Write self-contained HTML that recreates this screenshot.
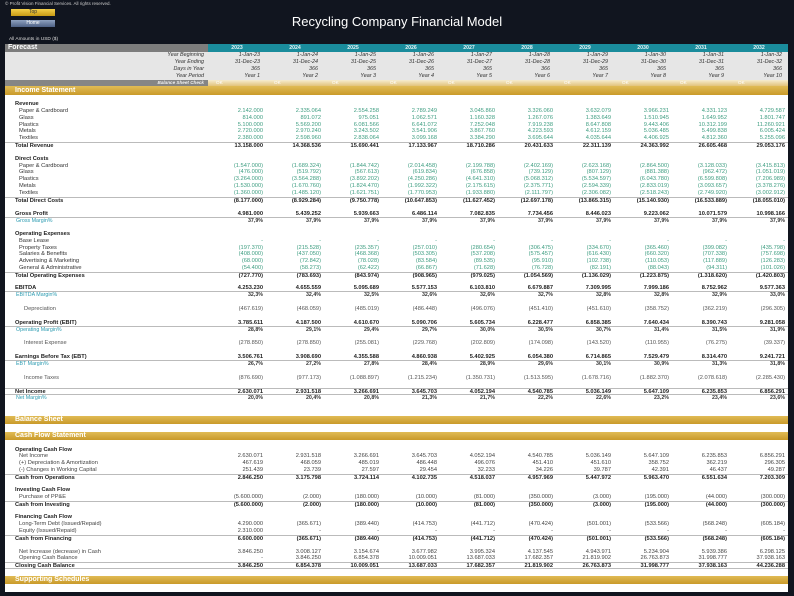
<!DOCTYPE html>
<html><head><meta charset="utf-8"><style>
*{margin:0;padding:0;box-sizing:border-box}
body{width:794px;height:596px;background:#11151f;font-family:"Liberation Sans",sans-serif;position:relative;overflow:hidden;color:#333}
.sheet{position:absolute;left:5px;top:44px;width:783px;height:548px;background:#fff}
.r{position:absolute;left:5px;width:783px;height:7px;line-height:7px;font-size:5.7px;display:grid;grid-template-columns:203px repeat(10,58px);white-space:nowrap}
.r>b{font-weight:normal;padding-left:14px}
.r>i{font-style:normal;text-align:right;padding-right:3px}
.g>i{color:#3d9d80}
.t{font-weight:bold;color:#222;border-top:0.6px solid #bbb}
.t>b{font-weight:bold;padding-left:10px}
.h>b{font-weight:bold;padding-left:10px;color:#222}
.m>b{color:#2a9ab0;padding-left:11px;font-size:5.3px}
.m>i{font-weight:bold;color:#333;font-size:5.3px}
.bt{border-bottom:0.6px solid #bbb}
.bar{position:absolute;left:5px;width:783px;height:9px;background:linear-gradient(#e0bb55,#c99a2a);color:#fff;font-weight:bold;font-size:7px;line-height:9px;padding-left:10px}
.hd{position:absolute;left:5px;width:783px;height:7px;line-height:7px;font-size:5.4px;display:grid;grid-template-columns:203px repeat(10,58px);background:#e6e6e6;font-style:italic;color:#333}
.hd>b{text-align:right;padding-right:4px;font-weight:normal}
.hd>i{text-align:right;padding-right:6px}
</style></head><body>
<div style="position:absolute;left:5px;top:1px;font-size:4.5px;color:#ccc">© Profit Vision Financial Services. All rights reserved.</div>
<div style="position:absolute;left:11px;top:9px;width:44px;height:7px;background:linear-gradient(#f3cf4a,#c89a14);font-size:5px;line-height:7px;text-align:center;color:#333">Top</div>
<div style="position:absolute;left:11px;top:20px;width:44px;height:7px;background:linear-gradient(#8fa2c0,#4e6186);font-size:5px;line-height:7px;text-align:center;color:#fff">Home</div>
<div style="position:absolute;left:0;width:794px;top:14px;text-align:center;color:#fff;font-size:13px">Recycling Company Financial Model</div>
<div style="position:absolute;left:9px;top:37px;font-size:4.8px;color:#ddd">All Amounts in USD ($)</div>
<div class="sheet"></div>
<div style="position:absolute;left:5px;top:44px;width:203px;height:8px;background:#7d7d7d;color:#fff;font-weight:bold;font-size:7px;line-height:8px;padding-left:3px">Forecast</div>
<div style="position:absolute;left:208px;top:44px;width:580px;height:8px;background:#1a8c9c;display:grid;grid-template-columns:repeat(10,58px);color:#e8f4f6;font-size:5.2px;line-height:8px;font-weight:bold;text-align:center"><span>2023</span><span>2024</span><span>2025</span><span>2026</span><span>2027</span><span>2028</span><span>2029</span><span>2030</span><span>2031</span><span>2032</span></div>
<div class="hd" style="top:52px"><b>Year Beginning</b><i>1-Jan-23</i><i>1-Jan-24</i><i>1-Jan-25</i><i>1-Jan-26</i><i>1-Jan-27</i><i>1-Jan-28</i><i>1-Jan-29</i><i>1-Jan-30</i><i>1-Jan-31</i><i>1-Jan-32</i></div>
<div class="hd" style="top:59px"><b>Year Ending</b><i>31-Dec-23</i><i>31-Dec-24</i><i>31-Dec-25</i><i>31-Dec-26</i><i>31-Dec-27</i><i>31-Dec-28</i><i>31-Dec-29</i><i>31-Dec-30</i><i>31-Dec-31</i><i>31-Dec-32</i></div>
<div class="hd" style="top:66px"><b>Days in Year</b><i>365</i><i>366</i><i>365</i><i>365</i><i>365</i><i>366</i><i>365</i><i>365</i><i>365</i><i>366</i></div>
<div class="hd" style="top:73px"><b>Year Period</b><i>Year 1</i><i>Year 2</i><i>Year 3</i><i>Year 4</i><i>Year 5</i><i>Year 6</i><i>Year 7</i><i>Year 8</i><i>Year 9</i><i>Year 10</i></div>
<div style="position:absolute;left:5px;top:80px;width:203px;height:6px;background:#858585;color:#eee;font-size:4.6px;line-height:6px;text-align:right;padding-right:4px;font-style:italic;font-weight:bold">Balance Sheet Check</div>
<div style="position:absolute;left:208px;top:80px;width:580px;height:6px;background:linear-gradient(#f6ecd0,#e2c37a);display:grid;grid-template-columns:repeat(10,58px);color:#fff;font-size:4.6px;line-height:6px;padding-left:8px"><span>OK</span><span>OK</span><span>OK</span><span>OK</span><span>OK</span><span>OK</span><span>OK</span><span>OK</span><span>OK</span><span>OK</span></div>
<div class="bar" style="top:86px">Income Statement</div>

<div class="r h" style="top:101px"><b>Revenue</b></div>
<div class="r g" style="top:108px"><b>Paper &amp; Cardboard</b><i>2.142.000</i><i>2.335.064</i><i>2.554.258</i><i>2.789.249</i><i>3.045.860</i><i>3.326.060</i><i>3.632.079</i><i>3.966.231</i><i>4.331.123</i><i>4.729.587</i></div>
<div class="r g" style="top:115px"><b>Glass</b><i>814.000</i><i>891.072</i><i>975.051</i><i>1.062.571</i><i>1.160.328</i><i>1.267.076</i><i>1.383.649</i><i>1.510.945</i><i>1.649.952</i><i>1.801.747</i></div>
<div class="r g" style="top:122px"><b>Plastics</b><i>5.100.000</i><i>5.569.200</i><i>6.081.566</i><i>6.641.072</i><i>7.252.048</i><i>7.919.238</i><i>8.647.808</i><i>9.443.406</i><i>10.312.199</i><i>11.260.921</i></div>
<div class="r g" style="top:128px"><b>Metals</b><i>2.720.000</i><i>2.970.240</i><i>3.243.502</i><i>3.541.906</i><i>3.867.760</i><i>4.223.593</i><i>4.612.159</i><i>5.036.485</i><i>5.499.838</i><i>6.005.424</i></div>
<div class="r g" style="top:135px"><b>Textiles</b><i>2.380.000</i><i>2.598.960</i><i>2.838.064</i><i>3.099.168</i><i>3.384.290</i><i>3.695.644</i><i>4.035.644</i><i>4.406.925</i><i>4.812.360</i><i>5.255.096</i></div>
<div class="r t" style="top:142px"><b>Total Revenue</b><i>13.158.000</i><i>14.368.536</i><i>15.690.441</i><i>17.133.967</i><i>18.710.286</i><i>20.431.633</i><i>22.311.139</i><i>24.363.992</i><i>26.605.468</i><i>29.053.176</i></div>

<div class="r h" style="top:156px"><b>Direct Costs</b></div>
<div class="r g" style="top:163px"><b>Paper &amp; Cardboard</b><i>(1.547.000)</i><i>(1.689.324)</i><i>(1.844.742)</i><i>(2.014.458)</i><i>(2.199.788)</i><i>(2.402.169)</i><i>(2.623.168)</i><i>(2.864.500)</i><i>(3.128.033)</i><i>(3.415.813)</i></div>
<div class="r g" style="top:169px"><b>Glass</b><i>(476.000)</i><i>(519.792)</i><i>(567.613)</i><i>(619.834)</i><i>(676.858)</i><i>(739.129)</i><i>(807.129)</i><i>(881.388)</i><i>(962.472)</i><i>(1.051.019)</i></div>
<div class="r g" style="top:176px"><b>Plastics</b><i>(3.264.000)</i><i>(3.564.288)</i><i>(3.892.202)</i><i>(4.250.286)</i><i>(4.641.310)</i><i>(5.068.312)</i><i>(5.534.597)</i><i>(6.043.780)</i><i>(6.599.808)</i><i>(7.206.989)</i></div>
<div class="r g" style="top:183px"><b>Metals</b><i>(1.530.000)</i><i>(1.670.760)</i><i>(1.824.470)</i><i>(1.992.322)</i><i>(2.175.615)</i><i>(2.375.771)</i><i>(2.594.339)</i><i>(2.833.019)</i><i>(3.093.657)</i><i>(3.378.276)</i></div>
<div class="r g" style="top:190px"><b>Textiles</b><i>(1.360.000)</i><i>(1.485.120)</i><i>(1.621.751)</i><i>(1.770.953)</i><i>(1.933.880)</i><i>(2.111.797)</i><i>(2.306.082)</i><i>(2.518.243)</i><i>(2.749.920)</i><i>(3.002.912)</i></div>
<div class="r t" style="top:197px"><b>Total Direct Costs</b><i>(8.177.000)</i><i>(8.929.284)</i><i>(9.750.778)</i><i>(10.647.853)</i><i>(11.627.452)</i><i>(12.697.178)</i><i>(13.865.315)</i><i>(15.140.930)</i><i>(16.533.889)</i><i>(18.055.010)</i></div>

<div class="r t bt" style="top:211px;border-top:none"><b>Gross Profit</b><i>4.981.000</i><i>5.439.252</i><i>5.939.663</i><i>6.486.114</i><i>7.082.835</i><i>7.734.456</i><i>8.446.023</i><i>9.223.062</i><i>10.071.579</i><i>10.998.166</i></div>
<div class="r m" style="top:218px"><b>Gross Margin%</b><i>37,9%</i><i>37,9%</i><i>37,9%</i><i>37,9%</i><i>37,9%</i><i>37,9%</i><i>37,9%</i><i>37,9%</i><i>37,9%</i><i>37,9%</i></div>

<div class="r h" style="top:231px"><b>Operating Expenses</b></div>
<div class="r g" style="top:238px"><b>Base Lease</b><i>-</i><i>-</i><i>-</i><i>-</i><i>-</i><i>-</i><i>-</i><i>-</i><i>-</i><i>-</i></div>
<div class="r g" style="top:245px"><b>Property Taxes</b><i>(197.370)</i><i>(215.528)</i><i>(235.357)</i><i>(257.010)</i><i>(280.654)</i><i>(306.475)</i><i>(334.670)</i><i>(365.460)</i><i>(399.082)</i><i>(435.798)</i></div>
<div class="r g" style="top:251px"><b>Salaries &amp; Benefits</b><i>(408.000)</i><i>(437.050)</i><i>(468.368)</i><i>(503.305)</i><i>(537.208)</i><i>(575.457)</i><i>(616.430)</i><i>(660.320)</i><i>(707.338)</i><i>(757.698)</i></div>
<div class="r g" style="top:258px"><b>Advertising &amp; Marketing</b><i>(68.000)</i><i>(72.842)</i><i>(78.028)</i><i>(83.584)</i><i>(89.535)</i><i>(95.910)</i><i>(102.738)</i><i>(110.053)</i><i>(117.889)</i><i>(126.283)</i></div>
<div class="r g" style="top:265px"><b>General &amp; Administrative</b><i>(54.400)</i><i>(58.273)</i><i>(62.422)</i><i>(66.867)</i><i>(71.628)</i><i>(76.728)</i><i>(82.191)</i><i>(88.043)</i><i>(94.311)</i><i>(101.026)</i></div>
<div class="r t" style="top:272px"><b>Total Operating Expenses</b><i>(727.770)</i><i>(783.693)</i><i>(843.974)</i><i>(908.965)</i><i>(979.025)</i><i>(1.054.569)</i><i>(1.136.029)</i><i>(1.223.875)</i><i>(1.318.620)</i><i>(1.420.803)</i></div>

<div class="r t bt" style="top:285px;border-top:none"><b>EBITDA</b><i>4.253.230</i><i>4.655.559</i><i>5.095.689</i><i>5.577.153</i><i>6.103.810</i><i>6.679.887</i><i>7.309.995</i><i>7.999.186</i><i>8.752.962</i><i>9.577.363</i></div>
<div class="r m" style="top:292px"><b>EBITDA Margin%</b><i>32,3%</i><i>32,4%</i><i>32,5%</i><i>32,6%</i><i>32,6%</i><i>32,7%</i><i>32,8%</i><i>32,8%</i><i>32,9%</i><i>33,0%</i></div>
<div class="r" style="top:306px;color:#555"><b style="padding-left:19px">Depreciation</b><i>(467.619)</i><i>(468.059)</i><i>(485.019)</i><i>(486.448)</i><i>(496.076)</i><i>(451.410)</i><i>(451.610)</i><i>(358.752)</i><i>(362.219)</i><i>(296.305)</i></div>
<div class="r t bt" style="top:320px;border-top:none"><b>Operating Profit (EBIT)</b><i>3.785.611</i><i>4.187.500</i><i>4.610.670</i><i>5.090.706</i><i>5.605.734</i><i>6.228.477</i><i>6.858.385</i><i>7.640.434</i><i>8.390.743</i><i>9.281.058</i></div>
<div class="r m" style="top:327px"><b>Operating Margin%</b><i>28,8%</i><i>29,1%</i><i>29,4%</i><i>29,7%</i><i>30,0%</i><i>30,5%</i><i>30,7%</i><i>31,4%</i><i>31,5%</i><i>31,9%</i></div>
<div class="r" style="top:340px;color:#555"><b style="padding-left:19px">Interest Expense</b><i>(278.850)</i><i>(278.850)</i><i>(255.081)</i><i>(229.768)</i><i>(202.809)</i><i>(174.098)</i><i>(143.520)</i><i>(110.955)</i><i>(76.275)</i><i>(39.337)</i></div>
<div class="r t bt" style="top:354px;border-top:none"><b>Earnings Before Tax (EBT)</b><i>3.506.761</i><i>3.908.690</i><i>4.355.588</i><i>4.860.938</i><i>5.402.925</i><i>6.054.380</i><i>6.714.865</i><i>7.529.479</i><i>8.314.470</i><i>9.241.721</i></div>
<div class="r m" style="top:361px"><b>EBT Margin%</b><i>26,7%</i><i>27,2%</i><i>27,8%</i><i>28,4%</i><i>28,9%</i><i>29,6%</i><i>30,1%</i><i>30,9%</i><i>31,3%</i><i>31,8%</i></div>
<div class="r" style="top:375px;color:#555"><b style="padding-left:19px">Income Taxes</b><i>(876.690)</i><i>(977.173)</i><i>(1.088.897)</i><i>(1.215.234)</i><i>(1.350.731)</i><i>(1.513.595)</i><i>(1.678.716)</i><i>(1.882.370)</i><i>(2.078.618)</i><i>(2.285.430)</i></div>
<div class="r t bt" style="top:388px"><b>Net Income</b><i>2.630.071</i><i>2.931.518</i><i>3.266.691</i><i>3.645.703</i><i>4.052.194</i><i>4.540.785</i><i>5.036.149</i><i>5.647.109</i><i>6.235.853</i><i>6.856.291</i></div>
<div class="r m" style="top:395px"><b>Net Margin%</b><i>20,0%</i><i>20,4%</i><i>20,8%</i><i>21,3%</i><i>21,7%</i><i>22,2%</i><i>22,6%</i><i>23,2%</i><i>23,4%</i><i>23,6%</i></div>

<div class="bar" style="top:416px;height:8px;line-height:8px">Balance Sheet</div>
<div class="bar" style="top:432px;height:8px;line-height:8px">Cash Flow Statement</div>

<div class="r h" style="top:447px"><b>Operating Cash Flow</b></div>
<div class="r" style="top:453px;color:#444"><b>Net Income</b><i>2.630.071</i><i>2.931.518</i><i>3.266.691</i><i>3.645.703</i><i>4.052.194</i><i>4.540.785</i><i>5.036.149</i><i>5.647.109</i><i>6.235.853</i><i>6.856.291</i></div>
<div class="r" style="top:460px;color:#444"><b>(+) Depreciation &amp; Amortization</b><i>467.619</i><i>468.059</i><i>485.019</i><i>486.448</i><i>496.076</i><i>451.410</i><i>451.610</i><i>358.752</i><i>362.219</i><i>296.305</i></div>
<div class="r" style="top:467px;color:#444"><b>(-) Changes in Working Capital</b><i>251.439</i><i>23.739</i><i>27.597</i><i>29.454</i><i>32.233</i><i>34.226</i><i>39.787</i><i>42.391</i><i>46.437</i><i>49.287</i></div>
<div class="r t" style="top:474px"><b>Cash from Operations</b><i>2.846.250</i><i>3.175.798</i><i>3.724.114</i><i>4.102.735</i><i>4.518.037</i><i>4.957.969</i><i>5.447.972</i><i>5.963.470</i><i>6.551.634</i><i>7.203.309</i></div>

<div class="r h" style="top:487px"><b>Investing Cash Flow</b></div>
<div class="r" style="top:494px;color:#444"><b>Purchase of PP&amp;E</b><i>(5.600.000)</i><i>(2.000)</i><i>(180.000)</i><i>(10.000)</i><i>(81.000)</i><i>(350.000)</i><i>(3.000)</i><i>(195.000)</i><i>(44.000)</i><i>(300.000)</i></div>
<div class="r t" style="top:501px"><b>Cash from Investing</b><i>(5.600.000)</i><i>(2.000)</i><i>(180.000)</i><i>(10.000)</i><i>(81.000)</i><i>(350.000)</i><i>(3.000)</i><i>(195.000)</i><i>(44.000)</i><i>(300.000)</i></div>

<div class="r h" style="top:514px"><b>Financing Cash Flow</b></div>
<div class="r" style="top:521px;color:#444"><b>Long-Term Debt (Issued/Repaid)</b><i>4.290.000</i><i>(365.671)</i><i>(389.440)</i><i>(414.753)</i><i>(441.712)</i><i>(470.424)</i><i>(501.001)</i><i>(533.566)</i><i>(568.248)</i><i>(605.184)</i></div>
<div class="r" style="top:528px;color:#444"><b>Equity (Issued/Repaid)</b><i>2.310.000</i><i>-</i><i>-</i><i>-</i><i>-</i><i>-</i><i>-</i><i>-</i><i>-</i><i>-</i></div>
<div class="r t" style="top:535px"><b>Cash from Financing</b><i>6.600.000</i><i>(365.671)</i><i>(389.440)</i><i>(414.753)</i><i>(441.712)</i><i>(470.424)</i><i>(501.001)</i><i>(533.566)</i><i>(568.248)</i><i>(605.184)</i></div>

<div class="r" style="top:549px;color:#444"><b>Net Increase (decrease) in Cash</b><i>3.846.250</i><i>3.008.127</i><i>3.154.674</i><i>3.677.982</i><i>3.995.324</i><i>4.137.545</i><i>4.943.971</i><i>5.234.904</i><i>5.939.386</i><i>6.298.125</i></div>
<div class="r" style="top:555px;color:#444"><b>Opening Cash Balance</b><i>-</i><i>3.846.250</i><i>6.854.378</i><i>10.009.051</i><i>13.687.033</i><i>17.682.357</i><i>21.819.902</i><i>26.763.873</i><i>31.998.777</i><i>37.938.163</i></div>
<div class="r t bt" style="top:562px"><b>Closing Cash Balance</b><i>3.846.250</i><i>6.854.378</i><i>10.009.051</i><i>13.687.033</i><i>17.682.357</i><i>21.819.902</i><i>26.763.873</i><i>31.998.777</i><i>37.938.163</i><i>44.236.288</i></div>

<div class="bar" style="top:576px;height:8px;line-height:8px">Supporting Schedules</div>
</body></html>
